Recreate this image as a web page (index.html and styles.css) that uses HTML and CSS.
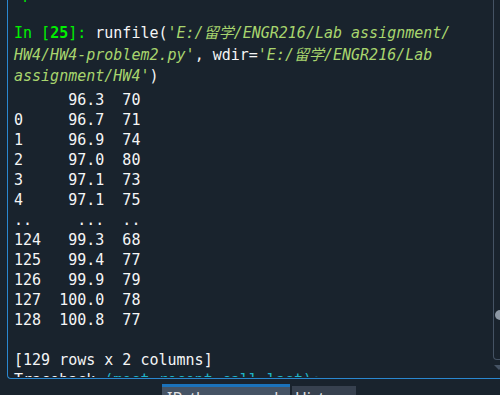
FILE: index.html
```html
<!DOCTYPE html>
<html lang="en">
<head>
    <meta charset="UTF-8">
    <meta name="viewport" content="width=device-width, initial-scale=1.0">
    <title>IPython console</title>
    <link rel="stylesheet" href="styles.css">
</head>
<body>
    <!-- console pane -->
    <div class="console">
        <div class="console-text">
            <div class="prev"><pre class="prev-line"><span class="prompt"> p</span></pre></div>
<pre class="input"><span class="prompt">In [<b>25</b>]: </span>runfile(<span class="str">'E:/留学/ENGR216/Lab assignment/
HW4/HW4-problem2.py'</span>, wdir=<span class="str">'E:/留学/ENGR216/Lab
assignment/HW4'</span>)</pre>
<pre class="output">      96.3  70
0     96.7  71
1     96.9  74
2     97.0  80
3     97.1  73
4     97.1  75
..     ...  ..
124   99.3  68
125   99.4  77
126   99.9  79
127  100.0  78
128  100.8  77

[129 rows x 2 columns]
Traceback <span class="tb">(most recent call last):</span></pre>
        </div>
        <div class="vscroll">
            <div class="track"><div class="handle"></div></div>
            <div class="arrow-down"></div>
        </div>
    </div>

    <!-- dock tabs -->
    <div class="tabbar">
        <div class="tab active">IPython console</div>
        <div class="tab">History</div>
    </div>
</body>
</html>
```

FILE: styles.css
```css
body {
    margin: 0;
    height: 395px;
    overflow: hidden;
    background-color: #19232d;
    font-family: "DejaVu Sans Mono", "Noto Sans CJK SC", monospace;
    color: #f4f5f6;
}
pre {
    margin: 0;
    font-family: inherit;
    font-size: 15px;
    white-space: pre;
}
.console {
    display: flex;
    height: 378px;
    margin-left: 7px;
    margin-right: -13px;
    border-left: 1px solid #2a87cf;
    border-bottom: 1px solid #2a87cf;
    border-bottom-left-radius: 4px;
    overflow: hidden;
}
.console-text {
    flex: 1;
    min-width: 0;
    margin-bottom: 1px;
    padding-left: 6px;
    overflow: hidden;
}
.prev {
    height: 4px;
    display: flex;
    flex-direction: column;
    justify-content: flex-end;
    overflow: hidden;
}
.prev-line {
    line-height: 20px;
    flex-shrink: 0;
}
.input {
    margin-top: 19px;
    line-height: 21.7px;
}
.output {
    margin-top: 2px;
    line-height: 20px;
}
.prompt {
    color: #00f000;
}
.prompt b {
    font-weight: bold;
}
.str {
    color: #a8d56e;
    font-style: italic;
}
.tb {
    color: #1fb3c6;
}
.vscroll {
    width: 20px;
    flex-shrink: 0;
    display: flex;
    flex-direction: column;
}
.track {
    height: 360px;
    box-sizing: border-box;
    border: 1px solid #455364;
    border-top: none;
    border-radius: 0 0 4px 4px;
    padding-top: 310px;
    padding-left: 1px;
}
.handle {
    width: 10px;
    height: 10px;
    border-radius: 50%;
    background-color: #8d98a4;
}
.arrow-down {
    width: 0;
    height: 0;
    margin-top: 5px;
    margin-left: 1px;
    border-left: 5px solid transparent;
    border-right: 5px solid transparent;
    border-top: 5px solid #455364;
}
.tabbar {
    display: flex;
    align-items: flex-start;
    gap: 2px;
    margin-top: 5px;
    padding-left: 162px;
}
.tab {
    height: 24px;
    box-sizing: border-box;
    font-family: "Noto Sans", sans-serif;
    font-size: 16px;
    line-height: 20px;
    color: #e0e1e3;
    white-space: nowrap;
    overflow: hidden;
}
.tab.active {
    width: 128px;
    padding: 1px 0 0 5px;
    border-top: 3px solid #1a72bb;
    background-color: #455364;
}
.tab:not(.active) {
    width: 64px;
    margin-top: 2px;
    padding: 2px 0 0 3px;
    background-color: #37414f;
}
```
